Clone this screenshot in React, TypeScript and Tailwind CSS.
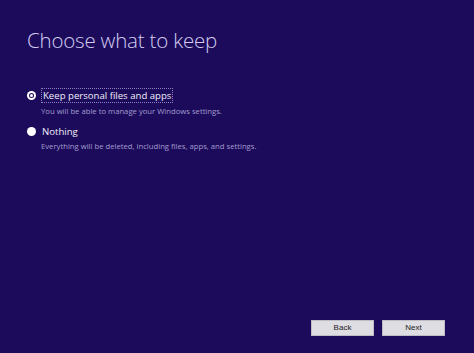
export default function App() {
  return (
    <div className="w-[474px] h-[353px] bg-[#1c0b5b] flex flex-col font-['Open_Sans',sans-serif] text-[#e6e2f5] overflow-hidden">
      <h1 className="mt-[25px] ml-[27px] text-[20.5px] font-light leading-[30px] text-[#d4ccf2] tracking-[-0.2px]">
        Choose what to keep
      </h1>

      <div className="mt-[33px] ml-[27px] flex flex-col">
        <div className="flex items-center gap-[5px]">
          <span className="w-[9px] h-[9px] rounded-full bg-white flex items-center justify-center">
            <span className="w-[5px] h-[5px] rounded-full bg-[#1c0b5b] flex items-center justify-center">
              <span className="w-[3px] h-[3px] rounded-full bg-white" />
            </span>
          </span>
          <span className="border border-dotted border-[#8c80c0] px-[1px] text-[9.6px] leading-[13px] text-[#f0edfa]">
            Keep personal files and apps
          </span>
        </div>
        <p className="ml-[14px] mt-[3px] text-[7.7px] leading-[10px] text-[#a39bd0]">
          You will be able to manage your Windows settings.
        </p>

        <div className="mt-[9px] flex items-center gap-[6px]">
          <span className="w-[9px] h-[9px] rounded-full bg-white" />
          <span className="text-[9.6px] leading-[13px] text-[#f0edfa]">Nothing</span>
        </div>
        <p className="ml-[14px] mt-[3px] text-[7.7px] leading-[10px] text-[#a39bd0]">
          Everything will be deleted, including files, apps, and settings.
        </p>
      </div>

      <div className="mt-auto mb-[17px] mr-[29px] flex justify-end gap-[8px]">
        <button className="w-[63px] h-[16px] bg-[#dedde2] border border-[#bdbcc4] text-[8px] leading-none text-[#222] font-['Liberation_Sans',sans-serif]">
          Back
        </button>
        <button className="w-[63px] h-[16px] bg-[#dedde2] border border-[#bdbcc4] text-[8px] leading-none text-[#222] font-['Liberation_Sans',sans-serif]">
          Next
        </button>
      </div>
    </div>
  );
}
